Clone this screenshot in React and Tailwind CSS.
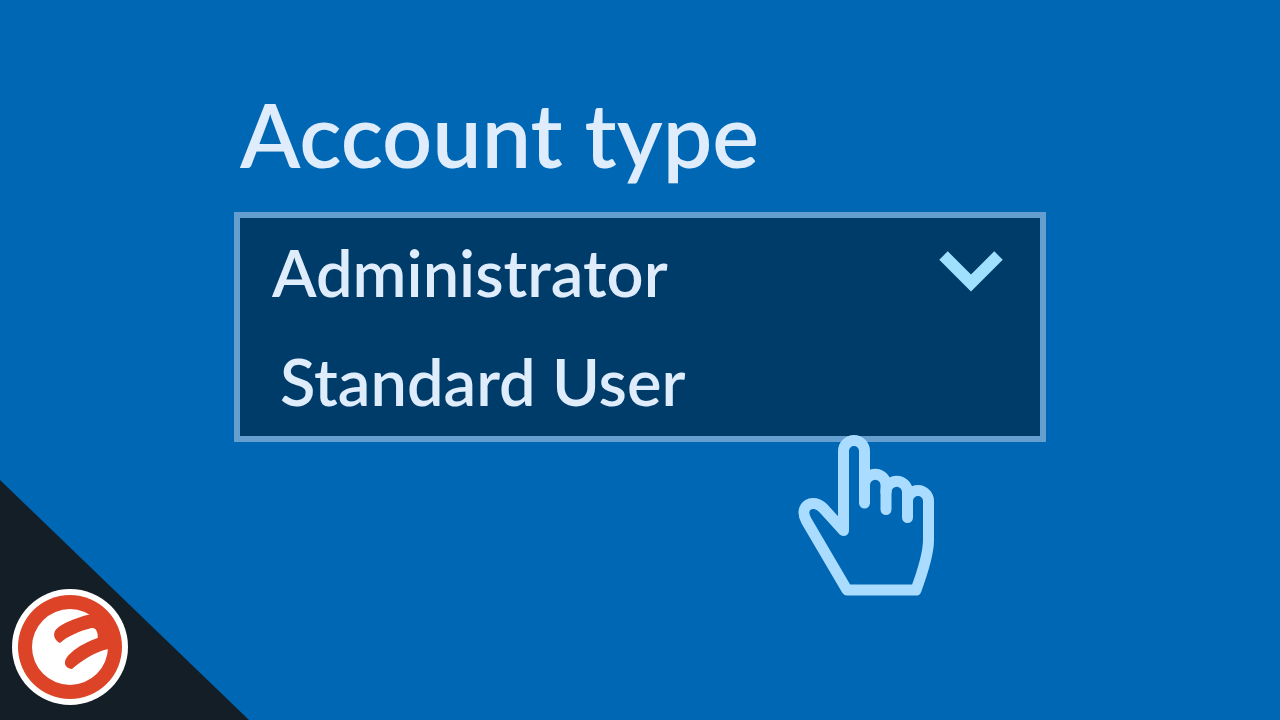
import React from "react";

function PointerHand() {
  return (
    <svg
      className="absolute right-24 top-[213px] w-[165px] h-[180px] pointer-events-none"
      viewBox="0 0 165 180"
      fill="none"
      stroke="#aadcff"
      strokeWidth="11"
      strokeLinecap="round"
      strokeLinejoin="round"
      aria-hidden="true"
    >
      <path d="M79.5 78V26A10.5 10.5 0 0 0 58.5 26V105.5L39 84C28 72 13 81 21.5 96L62 165H131Q143.5 131 143.5 115V76A10.5 10.5 0 0 0 122.5 76" />
      <path d="M79.5 60A10.75 10.75 0 0 1 101 60V84.5" />
      <path d="M101 67A10.75 10.75 0 0 1 122.5 67V92.5" />
    </svg>
  );
}

function CornerLogo() {
  return (
    <svg className="block w-[249px] h-[240px]" viewBox="0 0 249 240" role="img" aria-label="Logo">
      <path d="M0 0L249 240H0Z" fill="#141e26" />
      <circle cx="70" cy="167" r="58" fill="#ffffff" />
      <circle cx="70" cy="167" r="52" fill="#dd4326" />
      <circle cx="70" cy="167" r="38" fill="#ffffff" />
      <path
        transform="translate(0 100) scale(0.3333)"
        fill="#dd4326"
        d="M270 103C225 115 170 135 163 158C160 172 168 182 180 189C200 170 240 152 275 144C288 142 295 158 293 174C250 188 200 220 195 245C193 257 203 266 216 267C240 245 285 215 325 207L325 110Z"
      />
    </svg>
  );
}

export default function App() {
  return (
    <div className="flex flex-col justify-between min-h-screen overflow-hidden bg-[#0067b5] font-[Lato,sans-serif] font-semibold text-[#deecfc]">
      <main className="w-full max-w-[812px] mx-auto pt-20">
        <h1 id="account-type" className="pl-1.5 text-[88px] leading-[108px] font-semibold">
          Account type
        </h1>

        {/* Open account type menu */}
        <div className="relative mt-6">
          <div className="border-6 border-[#659fd0] bg-[#003c69] text-[65px] leading-[109px]">
            <button
              type="button"
              aria-haspopup="listbox"
              aria-expanded="true"
              className="flex items-center justify-between w-full pl-8 pr-9 text-left"
            >
              Administrator
              <svg className="w-16 h-10 overflow-visible" viewBox="0 0 64 40" fill="none" aria-hidden="true">
                <path d="M3.5 2.5L31 30L58.5 2.5" stroke="#9fe0ff" strokeWidth="12" />
              </svg>
            </button>
            <ul role="listbox" aria-labelledby="account-type">
              <li role="option" aria-selected="false" className="pl-10">
                Standard User
              </li>
            </ul>
          </div>
          <PointerHand />
        </div>
      </main>

      <footer>
        <CornerLogo />
      </footer>
    </div>
  );
}
